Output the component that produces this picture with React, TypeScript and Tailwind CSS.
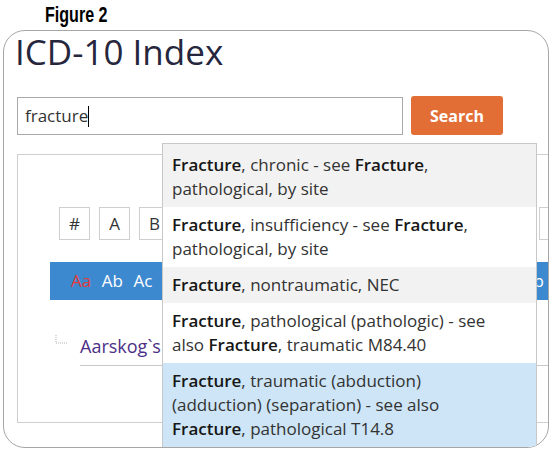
import React from 'react';

const letters = ['#', 'A', 'B', 'C', 'D', 'E', 'F', 'G', 'H', 'I', 'J', 'K', 'L', 'M'];
const pairs = 'abcdefghijklmnopq'.split('').map((c) => 'A' + c);

const B: React.FC<{ children: React.ReactNode }> = ({ children }) => (
  <span className="font-semibold text-[#161616]">{children}</span>
);

/* one suggestion in the autocomplete list */
const Row: React.FC<{ bg: string; top?: string; children: React.ReactNode }> = ({ bg, top, children }) => (
  <div className={`${bg} ${top ?? 'pt-[6px]'} pb-[6px] pl-[9px] pr-2 text-[17px] leading-[24px] text-[#333] whitespace-nowrap`}>
    {children}
  </div>
);

export default function App() {
  return (
    <div className="w-[553px] h-[453px] bg-white overflow-hidden">
      <div className="h-[30px] pl-[45px] pt-[4px]">
        <span className="inline-block origin-left scale-x-[0.73] text-[22px] leading-[20px] font-bold text-black font-['Liberation_Sans',sans-serif]">
          Figure 2
        </span>
      </div>

      <div className="relative ml-[3px] w-[546px] h-[418px] border border-[#a6a6a6] rounded-[22px] overflow-hidden font-['Open_Sans',sans-serif]">
        <h1 className="pl-[11px] text-[35px] leading-[42px] text-[#26263d]">ICD-10 Index</h1>

        <div className="mt-[24px] ml-[13px] flex items-start gap-[8px]">
          <div className="w-[386px] h-[38px] border border-[#a8a8a8] flex items-center pl-[7px] text-[17px] text-[#333]">
            fracture
            <span className="inline-block w-px h-[21px] bg-black" />
          </div>
          <button className="-mt-[1px] w-[92px] h-[39px] rounded-[3px] bg-[#e26e35] text-white text-[16px] font-bold">
            Search
          </button>
        </div>

        <div className="mt-[19px] ml-[13px] w-[560px] h-[269px] border border-[#cfcfcf]">
          <div className="mt-[52px] ml-[41px] flex gap-[9px]">
            {letters.map((l) => (
              <div
                key={l}
                className="w-[31px] h-[33px] shrink-0 border border-[#cfcfcf] flex items-center justify-center text-[17px] text-[#333]"
              >
                {l}
              </div>
            ))}
          </div>

          <div className="mt-[22px] ml-[32px] h-[38px] bg-[#3d89d0] flex items-center gap-[10.6px] pl-[21px] text-[17px] text-white">
            {pairs.map((p, i) => (
              <span key={p} className={`shrink-0 whitespace-nowrap ${i === 0 ? 'text-[#e23b3b]' : ''}`}>
                {p}
              </span>
            ))}
          </div>

          <div className="mt-[34px] pl-[37px] flex items-start">
            <svg width="14" height="9" viewBox="0 0 14 9" className="mt-[1px] shrink-0">
              <path d="M1 0 V8 H13" fill="none" stroke="#b5b5b5" strokeWidth="1" strokeDasharray="1 1" />
            </svg>
            <div className="ml-[11px] flex-1 border-b border-[#c8c8c8] pb-[6px]">
              <span className="text-[18px] leading-[24px] text-[#4b2f86]">Aarskog`s syndrome</span>
            </div>
          </div>
        </div>

        <div className="absolute left-[158px] top-[112px] w-[375px] border border-[#c8c8c8] bg-white">
          <Row bg="bg-[#f2f2f2]" top="pt-[9px]">
            <B>Fracture</B>, chronic - see <B>Fracture</B>,
            <br />
            pathological, by site
          </Row>
          <Row bg="bg-white">
            <B>Fracture</B>, insufficiency - see <B>Fracture</B>,
            <br />
            pathological, by site
          </Row>
          <Row bg="bg-[#f2f2f2]">
            <B>Fracture</B>, nontraumatic, NEC
          </Row>
          <Row bg="bg-white">
            <B>Fracture</B>, pathological (pathologic) - see
            <br />
            also <B>Fracture</B>, traumatic M84.40
          </Row>
          <Row bg="bg-[#cde5f6]">
            <B>Fracture</B>, traumatic (abduction)
            <br />
            (adduction) (separation) - see also
            <br />
            <B>Fracture</B>, pathological T14.8
          </Row>
        </div>
      </div>
    </div>
  );
}
